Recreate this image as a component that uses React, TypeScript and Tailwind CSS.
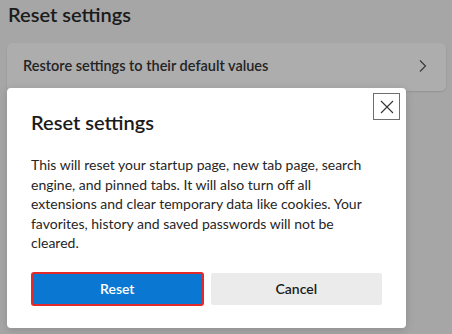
import React from "react";

const font = { fontFamily: '"Segoe UI", Lato, "Noto Sans", sans-serif' };

const lines = [
  "This will reset your startup page, new tab page, search",
  "engine, and pinned tabs. It will also turn off all",
  "extensions and clear temporary data like cookies. Your",
  "favorites, history and saved passwords will not be",
  "cleared.",
];

const App = () => {
  return (
    <div
      className="relative w-[452px] h-[334px] overflow-hidden bg-[#a6a6a6] text-[#1b1b1b]"
      style={font}
    >
      {/* page behind the dialog */}
      <div className="pl-[8px] text-[20px] leading-[28px] font-semibold">
        Reset settings
      </div>
      <div className="mx-[7px] mr-[6px] mt-[15px] h-[48px] rounded-[5px] bg-[#adadad] shadow-[0_1px_2px_rgba(0,0,0,0.12)] flex items-center justify-between pl-[16px] pr-[18px]">
        <span className="text-[14.5px] leading-[20px] -mt-[2px] font-semibold text-[#242424]">
          Restore settings to their default values
        </span>
        <svg width="10" height="14" viewBox="0 0 10 14" fill="none" className="-mt-[2px]">
          <path d="M2 1.5 L7.5 7 L2 12.5" stroke="#3a3a3a" strokeWidth="1.2" />
        </svg>
      </div>

      {/* dialog */}
      <div className="absolute left-[7px] top-[88px] w-[399px] h-[240px] rounded-[4px] bg-white shadow-[0_2px_8px_rgba(0,0,0,0.15)] px-[24px] pt-[20px]">
        <button className="absolute left-[366px] top-[5px] w-[27px] h-[27px] border-[1.5px] border-[#6e6e6e] flex items-center justify-center">
          <svg width="14" height="14" viewBox="0 0 14 14" fill="none">
            <path d="M1 1 L13 13 M13 1 L1 13" stroke="#333" strokeWidth="1.1" />
          </svg>
        </button>
        <h2 className="text-[20px] leading-[28px] font-semibold text-[#1b1b1b]">
          Reset settings
        </h2>
        <p className="mt-[19px] text-[14px] leading-[19.5px] text-[#262626]">
          {lines.map((l) => (
            <span key={l} className="block whitespace-nowrap">
              {l}
            </span>
          ))}
        </p>
        <div className="mt-[19px] flex items-center gap-[7px]">
          <button className="w-[173px] h-[34px] rounded-[3px] border-[2.5px] border-[#e22a2a] bg-[#0a78d2] text-white text-[14px] font-semibold">
            Reset
          </button>
          <button className="w-[172px] h-[32px] rounded-[2px] bg-[#ebebeb] text-[#1b1b1b] text-[14px] font-semibold">
            Cancel
          </button>
        </div>
      </div>
    </div>
  );
};

export default App;
